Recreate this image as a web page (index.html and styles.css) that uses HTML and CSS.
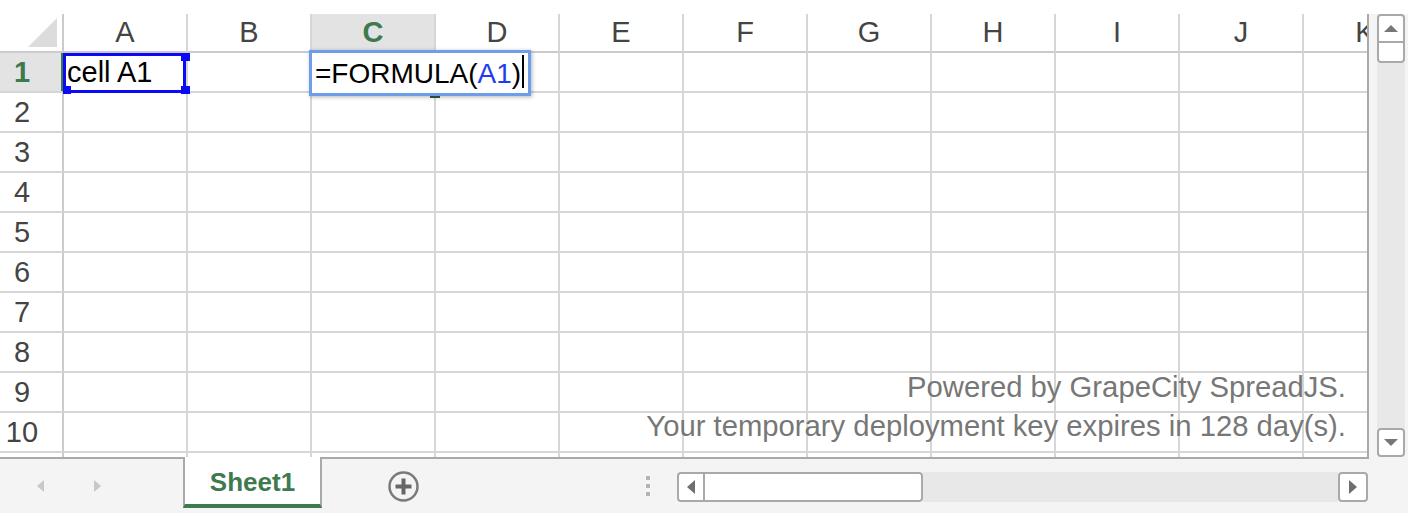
FILE: index.html
```html
<!DOCTYPE html>
<html lang="en">
<head>
    <meta charset="UTF-8">
    <meta name="viewport" content="width=device-width, initial-scale=1.0">
    <title>SpreadJS Formula Editing</title>
    <link rel="stylesheet" href="styles.css">
</head>
<body>
    <div class="workbook">
        <div class="sheet-area">
            <div class="viewport">
                <div id="grid" class="grid"></div>

                <div class="watermark">
                    Powered by GrapeCity SpreadJS.<br>
                    Your temporary deployment key expires in 128 day(s).
                </div>

                <!-- reference range of the formula being typed -->
                <div class="range-ref">
                    <span class="handle tr"></span>
                    <span class="handle br"></span>
                    <span class="handle bl"></span>
                </div>

                <div class="fill-handle"></div>
                <div class="cell-editor">=FORMULA(<span class="ref">A1</span>)<span class="caret"></span></div>
            </div>

            <div class="vscroll">
                <div class="sb-btn up"><span class="arrow arrow-up"></span></div>
                <div class="sb-thumb"></div>
                <div class="sb-track"></div>
                <div class="sb-btn down"><span class="arrow arrow-down"></span></div>
            </div>
        </div>

        <div class="tabbar">
            <div class="tab-nav">
                <span class="nav-left"></span>
                <span class="nav-right"></span>
            </div>
            <div class="sheet-tab">Sheet1</div>
            <div class="add-sheet">
                <svg width="31" height="31" viewBox="0 0 31 31">
                    <circle cx="15.5" cy="15.5" r="14" fill="none" stroke="#7a7a7a" stroke-width="2.5"/>
                    <path d="M15.5 7.5V23.5M7.5 15.5H23.5" stroke="#666" stroke-width="4"/>
                </svg>
            </div>
            <div class="splitter"><span></span><span></span><span></span></div>
            <div class="hscroll">
                <div class="sb-btn left"><span class="arrow arrow-left"></span></div>
                <div class="sb-thumb"></div>
                <div class="sb-track"></div>
                <div class="sb-btn right"><span class="arrow arrow-right"></span></div>
            </div>
        </div>
    </div>

    <script>
        const grid = document.getElementById('grid');
        const columns = 'ABCDEFGHIJK'.split('');

        let html = '<div class="corner"><span class="corner-mark"></span></div>';
        columns.forEach(col => {
            html += `<div class="col-head${col === 'C' ? ' active' : ''}">${col}</div>`;
        });

        // row 11 only peeks in under row 10, its label is not visible
        for (let row = 1; row <= 11; row++) {
            const label = row <= 10 ? row : '';
            html += `<div class="row-head${row === 1 ? ' active' : ''}">${label}</div>`;
            columns.forEach(col => {
                const value = (col === 'A' && row === 1) ? 'cell A1' : '';
                html += `<div class="cell">${value}</div>`;
            });
        }

        grid.innerHTML = html;
    </script>
</body>
</html>
```

FILE: styles.css
```css
body {
    margin: 0;
    background: #ffffff;
    font-family: 'Liberation Sans', Arial, sans-serif;
    overflow: hidden;
}

.workbook {
    padding-top: 14px;
    width: 1408px;
}

.sheet-area {
    display: flex;
    height: 445px;
}

/* grid */

.viewport {
    position: relative;
    width: 1367px;
    height: 443px;
    overflow: hidden;
    border-right: 2px solid #a9a9a9;
    border-bottom: 2px solid #a9a9a9;
}

.grid {
    display: grid;
    width: max-content;
    grid-template-columns: 64px repeat(11, 124px);
    grid-template-rows: 39px repeat(11, 40px);
}

.corner,
.col-head,
.row-head,
.cell {
    box-sizing: border-box;
    border-right: 2px solid #d6d6d6;
    border-bottom: 2px solid #d6d6d6;
    font-size: 29px;
    white-space: nowrap;
    overflow: hidden;
}

.corner {
    display: flex;
    align-items: flex-end;
    justify-content: flex-end;
    padding: 0 5px 4px 0;
    border-color: #cbcbcb;
}

.corner-mark {
    width: 0;
    height: 0;
    border-left: 29px solid transparent;
    border-bottom: 29px solid #dcdcdc;
}

.col-head {
    color: #444444;
    text-align: center;
    line-height: 37px;
    border-bottom-color: #cbcbcb;
}

.row-head {
    color: #444444;
    text-align: center;
    line-height: 38px;
    padding-right: 18px;
    border-right-color: #cbcbcb;
}

.col-head.active,
.row-head.active {
    background: #e3e3e3;
    color: #3d7a4e;
    font-weight: bold;
}

.row-head.active {
    border-right-color: #3d7a4e;
    box-shadow: inset -1px 0 0 #3d7a4e;
}

.cell {
    color: #000000;
    line-height: 38px;
    padding-left: 3px;
}

/* overlays on the grid */

.watermark {
    position: absolute;
    top: 354px;
    right: 21px;
    text-align: right;
    white-space: nowrap;
    font-size: 29.25px;
    line-height: 39px;
    color: #777777;
}

.range-ref {
    position: absolute;
    left: 63px;
    top: 39px;
    width: 123px;
    height: 40px;
    box-sizing: border-box;
    border: 3px solid #0a0af5;
}

.handle {
    position: absolute;
    width: 9px;
    height: 8px;
    background: #0a0af5;
}

.handle.tr { right: -7px; top: -3px; }
.handle.br { right: -7px; bottom: -4px; }
.handle.bl { left: -3px; bottom: -4px; width: 8px; }

.fill-handle {
    position: absolute;
    left: 430px;
    top: 81px;
    width: 10px;
    height: 3px;
    background: #2d5f3d;
}

.cell-editor {
    position: absolute;
    left: 309px;
    top: 36px;
    width: 222px;
    height: 46px;
    box-sizing: border-box;
    padding-left: 3px;
    border: 3px solid #6e9ee9;
    background: #ffffff;
    box-shadow: 1px 1px 4px rgba(0, 0, 0, 0.3);
    font-size: 28px;
    line-height: 41px;
    color: #000000;
    white-space: nowrap;
}

.cell-editor .ref {
    color: #1f3df0;
}

.caret {
    display: inline-block;
    width: 2px;
    height: 33px;
    margin-left: 1px;
    vertical-align: -5px;
    background: #000000;
}

/* scrollbars */

.vscroll {
    width: 39px;
    box-sizing: border-box;
    padding: 0 3px 2px 8px;
    background: #f4f4f4;
    display: flex;
    flex-direction: column;
}

.sb-btn {
    box-sizing: border-box;
    display: flex;
    align-items: center;
    justify-content: center;
    background: #ffffff;
    border: 2px solid #a9a9a9;
}

.sb-thumb {
    box-sizing: border-box;
    background: #ffffff;
    border: 2px solid #a9a9a9;
}

.sb-track {
    flex: 1;
    background: #e8e8e8;
}

.vscroll .sb-btn {
    height: 29px;
}

.vscroll .up {
    border-radius: 4px 4px 0 0;
}

.vscroll .sb-thumb {
    height: 22px;
    margin-top: -2px;
    border-radius: 0 0 4px 4px;
}

.vscroll .down {
    border-radius: 4px;
}

.arrow {
    width: 0;
    height: 0;
}

.arrow-up {
    border-left: 7px solid transparent;
    border-right: 7px solid transparent;
    border-bottom: 7px solid #777777;
}

.arrow-down {
    border-left: 7px solid transparent;
    border-right: 7px solid transparent;
    border-top: 7px solid #777777;
}

.arrow-left {
    border-top: 7px solid transparent;
    border-bottom: 7px solid transparent;
    border-right: 8px solid #6f6f6f;
}

.arrow-right {
    border-top: 7px solid transparent;
    border-bottom: 7px solid transparent;
    border-left: 8px solid #6f6f6f;
}

/* sheet tab bar */

.tabbar {
    display: flex;
    align-items: center;
    height: 54px;
    background: #f4f4f4;
}

.tab-nav {
    display: flex;
    align-items: center;
    gap: 50px;
    width: 183px;
    box-sizing: border-box;
    padding-left: 37px;
}

.nav-left {
    border-top: 6px solid transparent;
    border-bottom: 6px solid transparent;
    border-right: 7px solid #c8c8c8;
}

.nav-right {
    border-top: 6px solid transparent;
    border-bottom: 6px solid transparent;
    border-left: 7px solid #c8c8c8;
}

.sheet-tab {
    position: relative;
    align-self: flex-start;
    margin-top: -2px;
    width: 139px;
    height: 51px;
    box-sizing: border-box;
    padding-top: 4px;
    background: #ffffff;
    border-left: 2px solid #a9a9a9;
    border-right: 2px solid #a9a9a9;
    border-bottom: 4px solid #3d7a4e;
    text-align: center;
    font-size: 26px;
    font-weight: bold;
    line-height: 43px;
    color: #3d7a4e;
}

.add-sheet {
    margin-left: 66px;
    height: 31px;
}

.add-sheet svg {
    display: block;
}

.splitter {
    display: flex;
    flex-direction: column;
    gap: 4px;
    margin-left: 227px;
}

.splitter span {
    width: 4px;
    height: 4px;
    background: #b5b5b5;
}

.hscroll {
    display: flex;
    margin-left: 27px;
    margin-top: 2px;
    width: 691px;
    height: 30px;
}

.hscroll .left {
    width: 28px;
    border-radius: 4px 0 0 4px;
}

.hscroll .sb-thumb {
    width: 220px;
    margin-left: -2px;
    border-radius: 0 4px 4px 0;
}

.hscroll .right {
    width: 30px;
    border-radius: 4px;
}
```
